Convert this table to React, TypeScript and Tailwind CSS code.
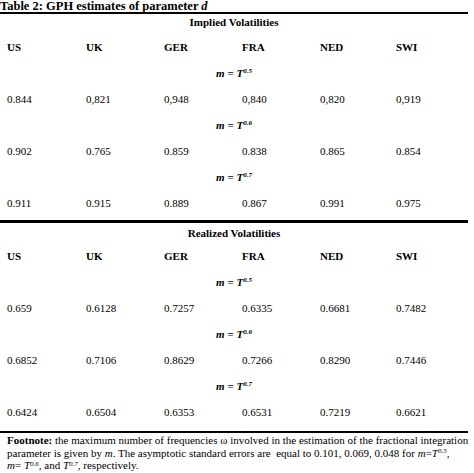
import React from "react";

const cols = "grid grid-cols-[79px_78px_78px_78px_76px_1fr] pl-[7px]";

function Row({ items, bold }: { items: string[]; bold?: boolean }) {
  return (
    <div className={`h-[26px] items-center ${cols} ${bold ? "font-bold" : ""}`}>
      {items.map((t, i) => (
        <div key={i} className="leading-none whitespace-nowrap">
          {t}
        </div>
      ))}
    </div>
  );
}

function MLabel({ e }: { e: string }) {
  return (
    <div className="h-[26px] flex items-center justify-center">
      <div className="leading-none whitespace-nowrap font-bold">
        <i>m</i> = <i>T</i>
        <sup className="text-[7px] italic">{e}</sup>
      </div>
    </div>
  );
}

const headers = ["US", "UK", "GER", "FRA", "NED", "SWI"];

export default function App() {
  return (
    <div className="w-[474px] h-[473px] overflow-hidden bg-white text-black font-['Liberation_Serif',serif] text-[11px]">
      <div className="w-[468px]">
        <div className="h-[12px] text-[12.5px] leading-[13px] font-bold whitespace-nowrap overflow-visible">
          Table 2: GPH estimates of parameter <i>d</i>
        </div>
        <div className="h-[2px] bg-black" />
        <div className="h-[16px] flex items-center justify-center font-bold leading-none">
          Implied Volatilities
        </div>
        <div className="mt-[4px]">
          <Row items={headers} bold />
          <MLabel e="0.5" />
          <Row items={["0.844", "0,821", "0,948", "0,840", "0,820", "0,919"]} />
          <MLabel e="0.6" />
          <Row items={["0.902", "0.765", "0.859", "0.838", "0.865", "0.854"]} />
          <MLabel e="0.7" />
          <Row items={["0.911", "0.915", "0.889", "0.867", "0.991", "0.975"]} />
        </div>
        <div className="mt-[4px] h-[3px] bg-black" />
        <div className="h-[20px] flex items-center justify-center font-bold leading-none">
          Realized Volatilities
        </div>
        <div>
          <Row items={headers} bold />
          <MLabel e="0.5" />
          <Row items={["0.659", "0.6128", "0.7257", "0.6335", "0.6681", "0.7482"]} />
          <MLabel e="0.6" />
          <Row items={["0.6852", "0.7106", "0.8629", "0.7266", "0.8290", "0.7446"]} />
          <MLabel e="0.7" />
          <Row items={["0.6424", "0.6504", "0.6353", "0.6531", "0.7219", "0.6621"]} />
        </div>
        <div className="mt-[6px] h-[2px] bg-black" />
        <div className="pl-[7px] mt-[1px] leading-[12.5px] whitespace-nowrap">
          <div>
            <b>Footnote:</b> the maximum number of frequencies ω involved in the estimation of the fractional integration
          </div>
          <div>
            parameter is given by <i>m</i>. The asymptotic standard errors are{"\u00a0"} equal to 0.101, 0.069, 0.048 for{" "}
            <i>m</i>=<i>T</i>
            <sup className="text-[7px] italic">0.5</sup>,
          </div>
          <div>
            <i>m</i>= <i>T</i>
            <sup className="text-[7px] italic">0.6</sup>, and <i>T</i>
            <sup className="text-[7px] italic">0.7</sup>, respectively.
          </div>
        </div>
      </div>
    </div>
  );
}
